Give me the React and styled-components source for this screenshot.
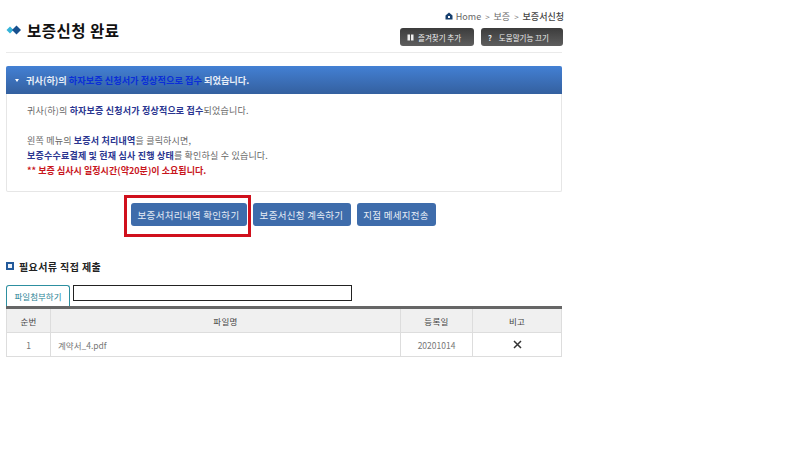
import React from 'react';
import styled, { createGlobalStyle } from 'styled-components';

const GlobalStyle = createGlobalStyle`
  html, body { margin: 0; padding: 0; background: #fff; }
  body { font-family: "Noto Sans CJK KR", "Noto Sans", sans-serif; color: #555; width: 800px; height: 450px; overflow: hidden; }
  * { box-sizing: border-box; }
`;

const Page = styled.div`
  width: 556px;
  margin-left: 6px;
  display: flex;
  flex-direction: column;
`;

const Header = styled.header`
  height: 53px;
  border-bottom: 1px solid #eaeaea;
  display: flex;
  justify-content: space-between;
`;

const TitleWrap = styled.div`
  display: flex;
  align-items: center;
  gap: 5px;
  padding-top: 7px;
`;

const Title = styled.h1`
  margin: 0;
  font-size: 15.5px;
  line-height: 20px;
  font-weight: 700;
  color: #111;
  letter-spacing: 0.5px;
`;

const HeaderRight = styled.div`
  display: flex;
  flex-direction: column;
  align-items: flex-end;
  margin-right: -2px;
`;

const Crumbs = styled.div`
  margin-top: 9px;
  height: 14px;
  display: flex;
  align-items: center;
  gap: 3px;
  font-size: 9px;
  color: #666;
`;

const CrumbSep = styled.span`
  font-size: 8px;
  color: #777;
  margin: 0 1px;
`;

const CrumbNow = styled.span`
  color: #444;
  font-weight: 500;
`;

const ToolRow = styled.div`
  margin-top: 5px;
  margin-right: 1px;
  display: flex;
  gap: 7px;
`;

const ToolButton = styled.div`
  height: 18px;
  width: ${p => p.$w}px;
  padding-left: 7px;
  border-radius: 3px;
  background: linear-gradient(#3c3c3c, #5e5e5e);
  color: #eee;
  font-size: 7.5px;
  display: flex;
  align-items: center;
  gap: ${p => p.$gap}px;
`;

const Panel = styled.section`
  margin-top: 13px;
  border: 1px solid #e6e6e6;
  border-top: 0;
  border-radius: 2px;
`;

const PanelHead = styled.div`
  height: 28px;
  margin: 0 -1px 0 -1px;
  padding-left: 9px;
  background: linear-gradient(#4380d4, #34609f);
  border-radius: 2px 2px 0 0;
  display: flex;
  align-items: center;
  gap: 7px;
  font-size: 9.2px;
  font-weight: 700;
  color: #e8eef8;
  white-space: pre;
`;

const Caret = styled.span`
  width: 0;
  height: 0;
  border-left: 2.5px solid transparent;
  border-right: 2.5px solid transparent;
  border-top: 3px solid #fff;
`;

const Blue = styled.span`
  color: #0a2ed8;
`;

const PanelBody = styled.div`
  padding: 9px 0 0 20px;
  font-size: 9px;
  line-height: 15px;
  color: #666;
  height: 97px;
`;

const Line = styled.div`
  height: 15px;
  margin-bottom: ${p => p.$gap || 0}px;
  white-space: pre;
  letter-spacing: 0.2px;
`;

const Em = styled.b`
  color: #2a3590;
  font-weight: 700;
`;

const Warn = styled.b`
  color: #c8161d;
  font-weight: 700;
  letter-spacing: 0.03px;
`;

const Actions = styled.div`
  margin-top: 11px;
  padding-right: 2px;
  display: flex;
  justify-content: center;
  gap: 6px;
`;

const ActionButton = styled.div`
  height: 23px;
  width: ${p => p.$w}px;
  background: #3e6cab;
  border-radius: 3px;
  color: #e6edf6;
  font-size: 9.5px;
  letter-spacing: 0.3px;
  display: flex;
  align-items: center;
  justify-content: center;
  white-space: pre;
`;

const Highlight = styled.div`
  position: relative;
  &::after {
    content: '';
    position: absolute;
    inset: -8px -4px -11px -7px;
    border: 3px solid #d0101c;
  }
`;

const SectionTitle = styled.h2`
  margin: 32px 0 0;
  height: 16px;
  display: flex;
  align-items: center;
  gap: 5px;
  font-size: 10px;
  font-weight: 700;
  color: #222;
  letter-spacing: 0.4px;
`;

const Bullet = styled.span`
  width: 8px;
  height: 8px;
  border: 2px solid #235a9b;
  background: #eef3fa;
`;

const UploadRow = styled.div`
  margin-top: 11px;
  display: flex;
  align-items: flex-start;
  gap: 3px;
  height: 21px;
`;

const AttachButton = styled.div`
  width: 64px;
  height: 21px;
  border: 1px solid #2d8fa0;
  border-bottom: 0;
  border-radius: 3px 3px 0 0;
  color: #2b8496;
  font-size: 8.5px;
  display: flex;
  align-items: center;
  justify-content: center;
`;

const FileInput = styled.div`
  width: 279px;
  height: 16px;
  border: 1px solid #222;
`;

const FileTable = styled.div`
  border-top: 3px solid #666;
  display: grid;
  grid-template-columns: 45px 350px 72px 1fr;
  font-size: 8.5px;
`;

const HeadCell = styled.div`
  height: 24px;
  background: #f0f0f0;
  border-bottom: 1px solid #ddd;
  border-right: 1px solid #ddd;
  border-left: ${p => (p.$first ? '1px solid #ddd' : '0')};
  display: flex;
  align-items: center;
  justify-content: center;
  color: #444;
  letter-spacing: 0.3px;
`;

const BodyCell = styled.div`
  height: 24px;
  border-bottom: 1px solid #ddd;
  border-right: 1px solid #ddd;
  border-left: ${p => (p.$first ? '1px solid #ddd' : '0')};
  display: flex;
  align-items: center;
  justify-content: ${p => (p.$left ? 'flex-start' : 'center')};
  padding-left: ${p => (p.$left ? 7 : 0)}px;
  color: #777;
`;

const DiamondLogo = () => (
  <svg width="16" height="10" viewBox="0 0 16 10">
    <path d="M4 1.5L7.5 5L4 8.5L0.5 5Z" fill="#35b3d8" />
    <path d="M10.5 0.5L15 5L10.5 9.5L6 5Z" fill="#17508f" />
  </svg>
);

const HomeIcon = () => (
  <svg width="8" height="8" viewBox="0 0 8 8">
    <path d="M4 0.5L7.5 3.5V7.5H0.5V3.5Z" fill="#17406f" />
    <rect x="3" y="4" width="2" height="2" fill="#fff" />
  </svg>
);

const BookIcon = () => (
  <svg width="7" height="7" viewBox="0 0 7 7">
    <path d="M0.5 0.5H3V6.5H0.5ZM4 0.5H6.5V6.5H4Z" fill="#eee" />
  </svg>
);

const CloseIcon = () => (
  <svg width="9" height="9" viewBox="0 0 9 9">
    <path d="M1 1L8 8M8 1L1 8" stroke="#333" strokeWidth="1.5" />
  </svg>
);

export default function App() {
  return (
    <Page>
      <GlobalStyle />
      <Header>
        <TitleWrap>
          <DiamondLogo />
          <Title>보증신청 완료</Title>
        </TitleWrap>
        <HeaderRight>
          <Crumbs>
            <HomeIcon />
            <span>Home</span>
            <CrumbSep>&gt;</CrumbSep>
            <span>보증</span>
            <CrumbSep>&gt;</CrumbSep>
            <CrumbNow>보증서신청</CrumbNow>
          </Crumbs>
          <ToolRow>
            <ToolButton $w={74} $gap={4}><BookIcon />즐겨찾기 추가</ToolButton>
            <ToolButton $w={82} $gap={7}><b>?</b>도움말기능 끄기</ToolButton>
          </ToolRow>
        </HeaderRight>
      </Header>

      <Panel>
        <PanelHead>
          <Caret />
          <span>귀사(하)의 <Blue>하자보증 신청서가 정상적으로 접수</Blue> 되었습니다.</span>
        </PanelHead>
        <PanelBody>
          <Line $gap={15}>귀사(하)의 <Em>하자보증 신청서가 정상적으로 접수</Em>되었습니다.</Line>
          <Line>왼쪽 메뉴의 <Em>보증서 처리내역</Em>을 클릭하시면,</Line>
          <Line><Em>보증수수료결제 및 현재 심사 진행 상태</Em>를 확인하실 수 있습니다.</Line>
          <Line><Warn>** 보증 심사시 일정시간(약20분)이 소요됩니다.</Warn></Line>
        </PanelBody>
      </Panel>

      <Actions>
        <Highlight>
          <ActionButton $w={116}>보증서처리내역 확인하기</ActionButton>
        </Highlight>
        <ActionButton $w={98}>보증서신청 계속하기</ActionButton>
        <ActionButton $w={79}>지점 메세지전송</ActionButton>
      </Actions>

      <SectionTitle><Bullet />필요서류 직접 제출</SectionTitle>

      <UploadRow>
        <AttachButton>파일첨부하기</AttachButton>
        <FileInput />
      </UploadRow>

      <FileTable>
        <HeadCell $first>순번</HeadCell>
        <HeadCell>파일명</HeadCell>
        <HeadCell>등록일</HeadCell>
        <HeadCell>비고</HeadCell>
        <BodyCell $first>1</BodyCell>
        <BodyCell $left>계약서_4.pdf</BodyCell>
        <BodyCell>20201014</BodyCell>
        <BodyCell><CloseIcon /></BodyCell>
      </FileTable>
    </Page>
  );
}
